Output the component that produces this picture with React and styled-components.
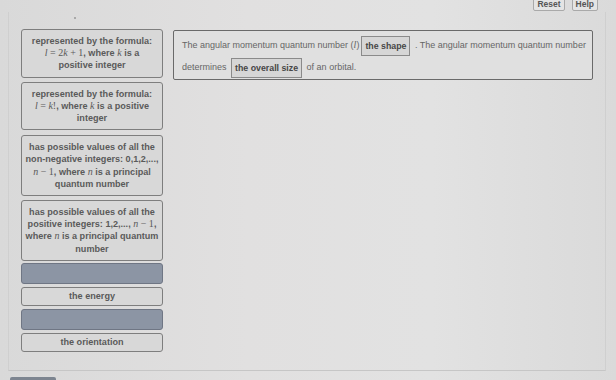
import React from "react";
import styled, { createGlobalStyle } from "styled-components";

const Global = createGlobalStyle`
  html, body { margin: 0; padding: 0; background: #dddddd; }
  body { font-family: "Liberation Sans", Arial, sans-serif; }
`;

const Page = styled.div`
  position: relative;
  width: 616px;
  height: 380px;
  overflow: hidden;
  background: linear-gradient(90deg, #d9d9d9 0%, #e1e0e0 40%, #e2e2e2 70%, #dadada 100%);
`;

const Toolbar = styled.div`
  display: flex;
  justify-content: flex-end;
  gap: 7px;
  height: 12px;
  padding-right: 18px;
`;

const ToolButton = styled.button`
  margin-top: -2px;
  height: 13px;
  padding: 0 3px;
  border: 1px solid #a9a9a9;
  border-radius: 2px;
  background: #e4e4e4;
  color: #555;
  font-family: "Liberation Sans", Arial, sans-serif;
  font-size: 8.5px;
  font-weight: 700;
  line-height: 11px;
`;

const Speck = styled.span`
  position: absolute;
  left: 74px;
  top: 17px;
  width: 2px;
  height: 2px;
  border-radius: 50%;
  background: #999;
`;

const Panel = styled.div`
  margin-left: 8px;
  width: 598px;
  height: 359px;
  padding: 17px 0 0 12px;
  box-sizing: border-box;
  border-left: 1px solid #cfcfcf;
  border-right: 1px solid #cfcfcf;
  border-bottom: 1px solid #c6c6c6;
  display: flex;
  align-items: flex-start;
  gap: 10px;
`;

const Column = styled.div`
  width: 142px;
  display: flex;
  flex-direction: column;
`;

const Card = styled.div`
  box-sizing: border-box;
  margin-bottom: ${p => p.$gap ?? 4}px;
  padding: ${p => (p.$slim ? "2px 4px" : "5px 3px")};
  height: ${p => (p.$slim ? "19px" : "auto")};
  border: 1px solid #7e7e7e;
  border-radius: 3px;
  background: #d8d8d8;
  color: #5a5a5a;
  font-size: 9.1px;
  font-weight: 700;
  line-height: ${p => (p.$slim ? "13px" : "12.2px")};
  text-align: center;
  white-space: nowrap;
`;

const Slot = styled.div`
  height: 21px;
  box-sizing: border-box;
  margin-bottom: 3px;
  border: 1px solid #6f7684;
  border-radius: 3px;
  background: #8c95a4;
`;

const M = styled.span`
  font-family: "Liberation Serif", "Times New Roman", serif;
  font-size: 10px;
  line-height: 1;
  font-weight: 400;
  font-style: ${p => (p.$up ? "normal" : "italic")};
`;

const Sentence = styled.div`
  width: 420px;
  height: 50px;
  box-sizing: border-box;
  margin-top: 1px;
  padding: 3px 8px;
  border: 1px solid #6a6a6a;
  border-radius: 2px;
  background: #e0e0e0;
  color: #666;
  font-size: 9px;
  line-height: 22px;
  white-space: nowrap;
`;

const Answer = styled.span`
  display: inline-block;
  height: 18px;
  padding: 0 3px;
  margin: 0 2px;
  border: 1px solid #8a8a8a;
  background: #d6d6d6;
  color: #464646;
  font-weight: 700;
  font-size: 8.8px;
  line-height: 18px;
  vertical-align: middle;
`;

const BottomTab = styled.div`
  position: absolute;
  left: 10px;
  bottom: 0;
  width: 46px;
  height: 3px;
  background: #7d8590;
  border-radius: 2px 2px 0 0;
`;

export default function App() {
  return (
    <Page>
      <Global />
      <Toolbar>
        <ToolButton>Reset</ToolButton>
        <ToolButton>Help</ToolButton>
      </Toolbar>
      <Speck />
      <Panel>
        <Column>
          <Card>
            represented by the formula:
            <br />
            <M>l</M> <M $up>=</M> <M $up>2</M><M>k</M> <M $up>+ 1</M>, where <M>k</M> is a
            <br />
            positive integer
          </Card>
          <Card $gap={5}>
            represented by the formula:
            <br />
            <M>l</M> <M $up>=</M> <M>k</M><M $up>!</M>, where <M>k</M> is a positive
            <br />
            integer
          </Card>
          <Card>
            has possible values of all the
            <br />
            non-negative integers: 0,1,2,...,
            <br />
            <M>n</M> <M $up>− 1</M>, where <M>n</M> is a principal
            <br />
            quantum number
          </Card>
          <Card $gap={2}>
            has possible values of all the
            <br />
            positive integers: 1,2,..., <M>n</M> <M $up>− 1</M>,
            <br />
            where <M>n</M> is a principal quantum
            <br />
            number
          </Card>
          <Slot />
          <Card $slim $gap={3}>the energy</Card>
          <Slot />
          <Card $slim>the orientation</Card>
        </Column>
        <Sentence>
          The angular momentum quantum number (<M>l</M>)
          <Answer>the shape</Answer> . The angular momentum quantum number
          <br />
          determines <Answer>the overall size</Answer> of an orbital.
        </Sentence>
      </Panel>
      <BottomTab />
    </Page>
  );
}
